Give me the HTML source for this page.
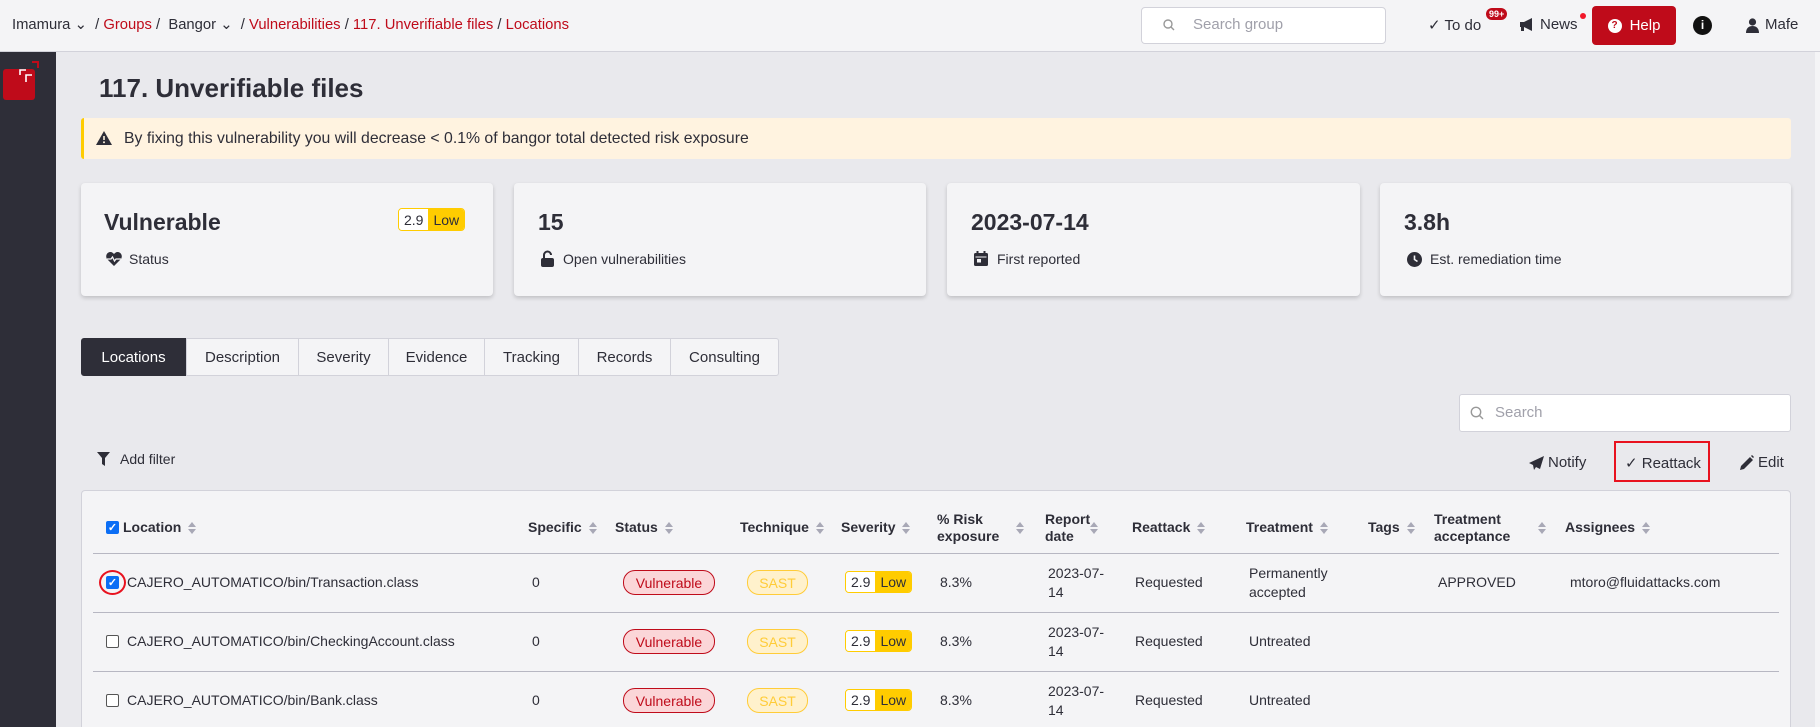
<!DOCTYPE html>
<html style="overflow:hidden;height:727px"><head><meta charset="utf-8"><style>
*{box-sizing:border-box;margin:0;padding:0}
body{width:1820px;height:727px;overflow:hidden;background:#e9e9ed;font-family:"Liberation Sans",sans-serif;color:#2e2e38;font-size:14px;position:relative}
.a{position:absolute}
.top{left:0;top:0;width:1820px;height:52px;background:#f4f4f6;border-bottom:1px solid #d2d2da}
.red{color:#bf0b1a}
.side{left:0;top:52px;width:56px;height:675px;background:#2e2e38}
.card{background:#f4f4f6;border-radius:4px;box-shadow:0 2px 4px rgba(0,0,0,.18)}
.tab{top:338px;height:38px;border:1px solid #d2d2da;background:#f4f4f6;display:flex;align-items:center;justify-content:center;font-size:15px}
.th{font-weight:bold;font-size:14px}
.sort{display:inline-block;position:relative;width:8px;height:14px;vertical-align:middle;margin-left:7px}
.sort:before,.sort:after{content:"";position:absolute;left:0;border-left:4px solid transparent;border-right:4px solid transparent}
.sort:before{top:1px;border-bottom:5px solid #a8a8b6}
.sort:after{top:8px;border-top:5px solid #a8a8b6}
.sabs{position:absolute;margin:0}
.pill{border-radius:12px;height:25px;display:flex;align-items:center;justify-content:center;font-size:14px}
.vul{background:#fbd6d8;border:1px solid #bf0b1a;color:#bf0b1a}
.sast{background:#fff1cc;border:1px solid #ffcc38;color:#ffcc38}
.sev{display:flex;height:22px;border:1px solid #ffcc00;border-radius:4px;overflow:hidden;font-size:14px}
.sev span{padding:0 5px;display:flex;align-items:center}
.sev span+span{background:#ffcc00}
.line{left:93px;width:1686px;height:1px;background:#b7b7c2}
.cb{width:13px;height:13px;border:1px solid #555;border-radius:2px;background:#fff}
.cbon{background:#0b6ef5;border-color:#0b6ef5;color:#fff;font-size:11px;line-height:12px;text-align:center;font-weight:bold}
</style></head><body>
<div class="a top"></div>
<div class="a" style="left:12px;top:16px;font-size:14.8px;white-space:nowrap">Imamura &#8964; &nbsp;/ <span class="red">Groups</span> / &nbsp;Bangor &#8964; &nbsp;/ <span class="red">Vulnerabilities</span> / <span class="red">117. Unverifiable files</span> / <span class="red">Locations</span></div>
<div class="a" style="left:1141px;top:7px;width:245px;height:37px;background:#fff;border:1px solid #d2d2da;border-radius:4px"></div>
<svg class="a" style="left:1163px;top:19px" width="12" height="12" viewBox="0 0 12 12"><circle cx="5" cy="5" r="4" fill="none" stroke="#999" stroke-width="1.4"/><path d="M8 8l3 3" stroke="#999" stroke-width="1.4"/></svg>
<div class="a" style="left:1193px;top:16px;color:#a0a0aa;font-size:15px">Search group</div>
<div class="a" style="left:1428px;top:16px;font-size:15px">&#10003; To do</div>
<div class="a" style="left:1486px;top:8px;background:#bf0b1a;color:#fff;font-size:9px;font-weight:bold;border-radius:8px;padding:1px 3px">99+</div>
<svg class="a" style="left:1519px;top:18px" width="15" height="14" viewBox="0 0 15 14"><path d="M1 4h4l8-4v13l-8-4H5v4H2V9H1z" fill="#2e2e38"/></svg>
<div class="a" style="left:1540px;top:16px;font-size:15px">News</div>
<div class="a" style="left:1580px;top:13px;width:6px;height:6px;border-radius:3px;background:#f2182a"></div>
<div class="a" style="left:1592px;top:6px;width:84px;height:39px;background:#bf0b1a;border-radius:4px;color:#fff;font-size:15px;display:flex;align-items:center;justify-content:center"><span style="display:inline-block;width:14px;height:14px;border-radius:7px;background:#fff;color:#bf0b1a;font-size:10px;font-weight:bold;text-align:center;line-height:14px;margin-right:8px">?</span>Help</div>
<div class="a" style="left:1693px;top:16px;width:19px;height:19px;border-radius:10px;background:#111;color:#fff;font-size:12px;font-weight:bold;text-align:center;line-height:19px">i</div>
<svg class="a" style="left:1746px;top:18px" width="13" height="15" viewBox="0 0 13 15"><circle cx="6.5" cy="4" r="3.6" fill="#2e2e38"/><path d="M0 15c0-5 3-7 6.5-7S13 10 13 15z" fill="#2e2e38"/></svg>
<div class="a" style="left:1765px;top:16px;font-size:15px">Mafe</div>

<div class="a side"></div>
<div class="a" style="left:3px;top:69px;width:32px;height:31px;background:#bf0b1a;border-radius:3px"></div>
<svg class="a" style="left:14px;top:61px" width="26" height="24" viewBox="0 0 26 24"><path d="M18 1h6v6" fill="none" stroke="#bf0b1a" stroke-width="2"/><path d="M6 14v-5h6M12 21v-7h6" fill="none" stroke="#fff" stroke-width="1.6"/></svg>

<div class="a" style="left:99px;top:73px;font-size:26px;font-weight:bold">117. Unverifiable files</div>
<div class="a" style="left:81px;top:118px;width:1710px;height:41px;background:#fff3e0;border-left:3px solid #ffcc00;border-radius:3px"></div>
<svg class="a" style="left:96px;top:131px" width="16" height="14" viewBox="0 0 16 14"><path d="M8 0l8 14H0z" fill="#2e2e38"/><path d="M8 5v4" stroke="#fff3e0" stroke-width="1.6"/><circle cx="8" cy="11.3" r="1" fill="#fff3e0"/></svg>
<div class="a" style="left:124px;top:130px;font-size:15.8px">By fixing this vulnerability you will decrease &lt; 0.1% of bangor total detected risk exposure</div>

<div class="a card" style="left:81px;top:183px;width:412px;height:113px"></div>
<div class="a card" style="left:514px;top:183px;width:412px;height:113px"></div>
<div class="a card" style="left:947px;top:183px;width:413px;height:113px"></div>
<div class="a card" style="left:1380px;top:183px;width:411px;height:113px"></div>
<div class="a" style="left:104px;top:209px;font-size:23px;font-weight:bold">Vulnerable</div>
<div class="a sev" style="left:398px;top:208px;height:23px"><span style="background:#fff">2.9</span><span>Low</span></div>
<div class="a" style="left:538px;top:209px;font-size:23px;font-weight:bold">15</div>
<div class="a" style="left:971px;top:209px;font-size:23px;font-weight:bold">2023-07-14</div>
<div class="a" style="left:1404px;top:209px;font-size:23px;font-weight:bold">3.8h</div>
<svg class="a" style="left:106px;top:252px" width="16" height="14" viewBox="0 0 16 14"><path d="M8 14L1 7C-1 4 1 0 4.5 0 6 0 7 1 8 2c1-1 2-2 3.5-2C15 0 17 4 15 7z" fill="#2e2e38"/><path d="M1 7h4l1.5-2 2 4 1.5-2h5" fill="none" stroke="#f4f4f6" stroke-width="1.3"/></svg>
<div class="a" style="left:129px;top:251px">Status</div>
<svg class="a" style="left:541px;top:250px" width="13" height="17" viewBox="0 0 13 17"><path d="M3 8V5a3.5 3.5 0 017 0" fill="none" stroke="#2e2e38" stroke-width="2"/><rect x="0" y="8" width="13" height="9" rx="2" fill="#2e2e38"/></svg>
<div class="a" style="left:563px;top:251px">Open vulnerabilities</div>
<svg class="a" style="left:974px;top:251px" width="14" height="15" viewBox="0 0 14 15"><rect x="0" y="2" width="14" height="13" rx="1.5" fill="#2e2e38"/><path d="M3.5 0v3M10.5 0v3" stroke="#2e2e38" stroke-width="2"/><rect x="1.5" y="5.5" width="11" height="1" fill="#f4f4f6"/><rect x="3" y="8" width="4" height="3.5" fill="#f4f4f6"/></svg>
<div class="a" style="left:997px;top:251px">First reported</div>
<svg class="a" style="left:1407px;top:252px" width="15" height="15" viewBox="0 0 15 15"><circle cx="7.5" cy="7.5" r="7.5" fill="#2e2e38"/><path d="M7.5 3.5v4l3 2" fill="none" stroke="#f4f4f6" stroke-width="1.6"/></svg>
<div class="a" style="left:1430px;top:251px">Est. remediation time</div>

<div class="a tab" style="left:81px;width:105px;background:#2e2e38;color:#fff;border-color:#2e2e38;border-radius:3px 0 0 3px">Locations</div>
<div class="a tab" style="left:186px;width:113px">Description</div>
<div class="a tab" style="left:298px;width:91px">Severity</div>
<div class="a tab" style="left:388px;width:97px">Evidence</div>
<div class="a tab" style="left:484px;width:95px">Tracking</div>
<div class="a tab" style="left:578px;width:93px">Records</div>
<div class="a tab" style="left:670px;width:109px;border-radius:0 3px 3px 0">Consulting</div>

<div class="a" style="left:1459px;top:394px;width:332px;height:38px;background:#fff;border:1px solid #d2d2da;border-radius:3px"></div>
<svg class="a" style="left:1470px;top:406px" width="14" height="14" viewBox="0 0 14 14"><circle cx="6" cy="6" r="4.7" fill="none" stroke="#999" stroke-width="1.4"/><path d="M9.5 9.5l3.5 3.5" stroke="#999" stroke-width="1.4"/></svg>
<div class="a" style="left:1495px;top:404px;color:#a0a0aa;font-size:15px">Search</div>

<svg class="a" style="left:97px;top:452px" width="13" height="14" viewBox="0 0 13 14"><path d="M0 0h13L8 6v8L5 12V6z" fill="#2e2e38"/></svg>
<div class="a" style="left:120px;top:451px">Add filter</div>
<svg class="a" style="left:1529px;top:456px" width="15" height="14" viewBox="0 0 15 14"><path d="M15 0L0 7l4 2 1 5 2-3 4 2z" fill="#2e2e38"/></svg>
<div class="a" style="left:1548px;top:454px;font-size:15px">Notify</div>
<div class="a" style="left:1614px;top:441px;width:96px;height:41px;border:2px solid #e8121f"></div>
<div class="a" style="left:1625px;top:454px;font-size:15px">&#10003; Reattack</div>
<svg class="a" style="left:1740px;top:455px" width="14" height="15" viewBox="0 0 14 15"><path d="M0 15l1-4 9-9 3 3-9 9z M11 1l1-1 2 2-1 1z" fill="#2e2e38"/></svg>
<div class="a" style="left:1758px;top:454px;font-size:15px">Edit</div>

<div class="a" style="left:81px;top:490px;width:1710px;height:237px;background:#f4f4f6;border:1px solid #d2d2da;border-bottom:none;border-radius:4px 4px 0 0"></div>
<div class="a cb cbon" style="left:106px;top:521px">&#10003;</div>
<div class="a th" style="left:123px;top:519px">Location<i class="sort"></i></div>
<div class="a th" style="left:528px;top:519px">Specific<i class="sort"></i></div>
<div class="a th" style="left:615px;top:519px">Status<i class="sort"></i></div>
<div class="a th" style="left:740px;top:519px">Technique<i class="sort"></i></div>
<div class="a th" style="left:841px;top:519px">Severity<i class="sort"></i></div>
<div class="a th" style="left:937px;top:511px;line-height:17px">% Risk<br>exposure</div><i class="sort sabs" style="left:1016px;top:521px"></i>
<div class="a th" style="left:1045px;top:511px;line-height:17px">Report<br>date</div><i class="sort sabs" style="left:1090px;top:521px"></i>
<div class="a th" style="left:1132px;top:519px">Reattack<i class="sort"></i></div>
<div class="a th" style="left:1246px;top:519px">Treatment<i class="sort"></i></div>
<div class="a th" style="left:1368px;top:519px">Tags<i class="sort"></i></div>
<div class="a th" style="left:1434px;top:511px;line-height:17px">Treatment<br>acceptance</div><i class="sort sabs" style="left:1538px;top:521px"></i>
<div class="a th" style="left:1565px;top:519px">Assignees<i class="sort"></i></div>
<div class="a line" style="top:553px"></div>
<div class="a line" style="top:612px"></div>
<div class="a line" style="top:671px"></div>

<div class="a" style="left:99px;top:570px;width:27px;height:25px;border:2px solid #e8121f;border-radius:50%"></div>
<div class="a cb cbon" style="left:106px;top:576px">&#10003;</div>
<div class="a" style="left:127px;top:574px">CAJERO_AUTOMATICO/bin/Transaction.class</div>
<div class="a cb" style="left:106px;top:635px"></div>
<div class="a" style="left:127px;top:633px">CAJERO_AUTOMATICO/bin/CheckingAccount.class</div>
<div class="a cb" style="left:106px;top:694px"></div>
<div class="a" style="left:127px;top:692px">CAJERO_AUTOMATICO/bin/Bank.class</div>

<div class="a" style="left:532px;top:574px">0</div>
<div class="a" style="left:532px;top:633px">0</div>
<div class="a" style="left:532px;top:692px">0</div>
<div class="a pill vul" style="left:623px;top:570px;width:92px">Vulnerable</div>
<div class="a pill vul" style="left:623px;top:629px;width:92px">Vulnerable</div>
<div class="a pill vul" style="left:623px;top:688px;width:92px">Vulnerable</div>
<div class="a pill sast" style="left:747px;top:570px;width:61px">SAST</div>
<div class="a pill sast" style="left:747px;top:629px;width:61px">SAST</div>
<div class="a pill sast" style="left:747px;top:688px;width:61px">SAST</div>
<div class="a sev" style="left:845px;top:571px"><span style="background:#fff">2.9</span><span>Low</span></div>
<div class="a sev" style="left:845px;top:630px"><span style="background:#fff">2.9</span><span>Low</span></div>
<div class="a sev" style="left:845px;top:689px"><span style="background:#fff">2.9</span><span>Low</span></div>
<div class="a" style="left:940px;top:574px">8.3%</div>
<div class="a" style="left:940px;top:633px">8.3%</div>
<div class="a" style="left:940px;top:692px">8.3%</div>
<div class="a" style="left:1048px;top:564px;line-height:19px">2023-07-<br>14</div>
<div class="a" style="left:1048px;top:623px;line-height:19px">2023-07-<br>14</div>
<div class="a" style="left:1048px;top:682px;line-height:19px">2023-07-<br>14</div>
<div class="a" style="left:1135px;top:574px">Requested</div>
<div class="a" style="left:1135px;top:633px">Requested</div>
<div class="a" style="left:1135px;top:692px">Requested</div>
<div class="a" style="left:1249px;top:564px;line-height:19px">Permanently<br>accepted</div>
<div class="a" style="left:1249px;top:633px">Untreated</div>
<div class="a" style="left:1249px;top:692px">Untreated</div>
<div class="a" style="left:1438px;top:574px">APPROVED</div>
<div class="a" style="left:1570px;top:574px">mtoro@fluidattacks.com</div>
<div class="a" style="left:1815px;top:52px;width:5px;height:675px;background:#f4f4f6"></div>
</body></html>
